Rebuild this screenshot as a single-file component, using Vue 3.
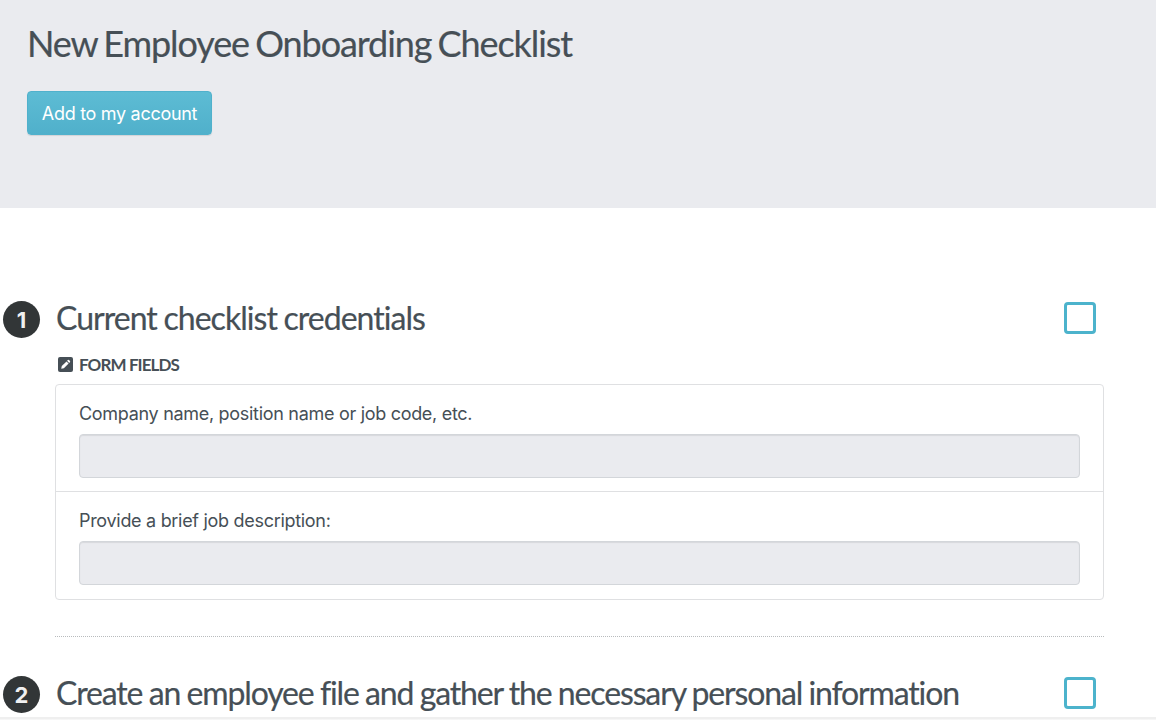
<script setup>
import { ref } from 'vue'

const steps = ref([
  {
    title: 'Current checklist credentials',
    done: false,
    fields: [
      { id: 'company', label: 'Company name, position name or job code, etc.' },
      { id: 'description', label: 'Provide a brief job description:' }
    ]
  },
  {
    title: 'Create an employee file and gather the necessary personal information',
    done: false,
    fields: []
  }
])
</script>

<template>
  <div class="page">
    <header>
      <h1>New Employee Onboarding Checklist</h1>
      <button class="btn-primary">Add to my account</button>
    </header>

    <main>
      <section v-for="(step, index) in steps" :key="step.title" class="step">
        <div class="step-header">
          <span class="number">{{ index + 1 }}</span>
          <h2 :class="{ long: step.title.length > 50 }">{{ step.title }}</h2>
          <button
            class="check"
            :class="{ done: step.done }"
            :aria-label="step.title"
            @click="step.done = !step.done"
          ></button>
        </div>

        <div v-if="step.fields.length" class="step-body">
          <h3>
            <svg class="icon" viewBox="0 0 15 15">
              <rect width="15" height="15" rx="2" fill="#464f56" />
              <path d="M3.2 11.8l.6-2.7 4.7-4.7 2.1 2.1-4.7 4.7z" fill="#fff" />
              <path d="M9.1 3.8l.8-.8q.5-.4 1 0l1.1 1.1q.4.5 0 1l-.8.8z" fill="#fff" />
            </svg>
            <span>Form fields</span>
          </h3>
          <div class="card">
            <div v-for="field in step.fields" :key="field.id" class="form-group">
              <label :for="field.id">{{ field.label }}</label>
              <input :id="field.id" type="text" disabled>
            </div>
          </div>
        </div>
      </section>
    </main>

    <div class="bottom-bar"></div>
  </div>
</template>

<style>
body {
  background: #fff;
  overflow: hidden;
}
</style>

<style scoped>
.page {
  position: relative;
  height: 720px;
  overflow: hidden;
  box-sizing: border-box;
  font-family: Inter, "Liberation Sans", sans-serif;
  color: #464f56;
}

header {
  height: 208px;
  padding: 21px 27px 0;
  box-sizing: border-box;
  background: #eaebef;
}

h1,
h2,
h3 {
  margin: 0;
  font-family: Lato, sans-serif;
  font-weight: 400;
  white-space: nowrap;
}

h1 {
  font-size: 36px;
  line-height: 44px;
  letter-spacing: -1.08px;
  word-spacing: -2px;
  -webkit-text-stroke: 0.2px #464f56;
}

.btn-primary {
  display: block;
  width: 185px;
  height: 43.5px;
  margin-top: 26px;
  padding: 1px 0 0;
  border: 1px solid #50b1cc;
  border-radius: 4px;
  background: linear-gradient(#5dbcd4, #50b0cb);
  box-shadow: 0 1px 1px rgba(0, 0, 0, 0.1);
  color: #fff;
  font-family: inherit;
  font-size: 18px;
  letter-spacing: -0.3px;
  white-space: nowrap;
  cursor: pointer;
}

main {
  padding: 91px 52px 0 3px;
}

.step-header {
  display: flex;
  align-items: center;
  height: 38px;
}

.number {
  flex: none;
  width: 37px;
  height: 37px;
  margin: 3px 16px 0 0;
  border-radius: 50%;
  background: #323637;
  color: #f0f0f0;
  font-size: 22px;
  font-weight: 700;
  line-height: 38px;
  text-align: center;
}

h2 {
  flex: 1;
  font-size: 32px;
  line-height: 38px;
  letter-spacing: -0.96px;
  word-spacing: -0.7px;
  -webkit-text-stroke: 0.2px #464f56;
}

h2.long {
  letter-spacing: -1.14px;
}

.check {
  flex: none;
  width: 32px;
  height: 32px;
  margin-right: 8px;
  padding: 0;
  border: 3px solid #4cb3cc;
  border-radius: 4px;
  background: #fff;
  cursor: pointer;
}

.check.done {
  background: #4cb3cc;
}

.step-body {
  margin: 0 0 37px 52px;
  padding-bottom: 36px;
  border-bottom: 1px dotted #b8bbbd;
}

h3 {
  display: flex;
  align-items: center;
  height: 22px;
  padding: 16px 0 9px 3px;
  font-size: 17px;
  font-weight: 700;
  letter-spacing: -0.9px;
  text-transform: uppercase;
}

.icon {
  width: 15px;
  height: 15px;
  margin-right: 6px;
}

.card {
  border: 1px solid #dfe0e2;
  border-radius: 4px;
}

.form-group {
  height: 106px;
  padding: 17px 23px 0;
  box-sizing: border-box;
}

.form-group + .form-group {
  height: 108px;
  border-top: 1px solid #dfe0e2;
}

label {
  display: block;
  font-size: 18px;
  line-height: 24px;
  letter-spacing: -0.3px;
}

input {
  display: block;
  width: 100%;
  height: 44px;
  margin-top: 8px;
  padding: 0 12px;
  box-sizing: border-box;
  border: 1px solid #d3d6da;
  border-radius: 4px;
  background: #eaebef;
  box-shadow: inset 0 1px 1px rgba(0, 0, 0, 0.08);
}

/* fixed bar peeking in at the bottom edge */
.bottom-bar {
  position: absolute;
  right: 0;
  bottom: 0;
  left: 0;
  height: 3px;
  background: linear-gradient(#efefef 50%, #fafafa);
}
</style>
